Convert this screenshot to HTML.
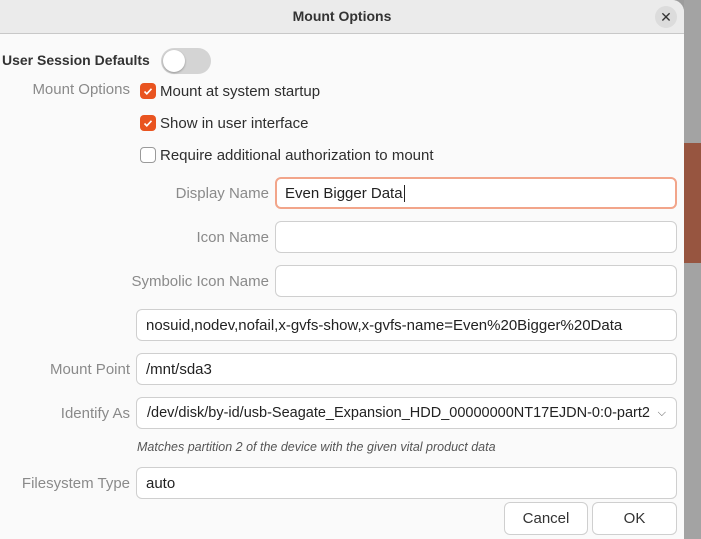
<!DOCTYPE html>
<html><head><style>
*{box-sizing:border-box;margin:0;padding:0}
body{width:701px;height:539px;overflow:hidden;background:#9c9c9c;font-family:"Liberation Sans",sans-serif;font-size:15px;color:#2e2e2e;position:relative}
.strip{position:absolute;left:684px;top:0;width:17px;height:539px;background:#a3a3a3}
.brown{position:absolute;left:684px;top:143px;width:17px;height:120px;background:#975540}
.dlg{position:absolute;left:0;top:0;width:684px;height:539px;background:#fafafa;border-top-right-radius:12px;overflow:hidden}
.hdr{height:34px;background:#ebebeb;border-bottom:1px solid #c8c8c8;text-align:center;line-height:33px;font-weight:bold;font-size:14px;color:#333}
.x{position:absolute;left:655px;top:6px;width:22px;height:22px;border-radius:50%;background:#dcdcdc;text-align:center;line-height:22px;font-size:14px;color:#333}
.a{position:absolute}
.lbl{position:absolute;color:#8a8a8a;text-align:right}
.f{position:absolute;background:#fff;border:1px solid #cfcfcf;border-radius:6px;padding-left:9px;line-height:31px;color:#222}
.cb{position:absolute;width:16px;height:16px;border-radius:4px}
.on{background:#e95420}
.off{border:1px solid #9a9a9a;background:#fff}
.btn{position:absolute;background:#fff;border:1px solid #cfcfcf;border-radius:6px;text-align:center;line-height:32px;color:#333}
</style></head><body>
<div class="strip"></div><div class="brown"></div>
<div class="dlg">
<div class="hdr">Mount Options</div>
<div class="x">✕</div>
<div class="a" style="left:2px;top:52px;font-weight:bold;color:#333;font-size:14px">User Session Defaults</div>
<div class="a" style="left:161px;top:48px;width:50px;height:26px;border-radius:13px;background:#d4d4d4"><div style="position:absolute;left:2px;top:2px;width:22px;height:22px;border-radius:50%;background:#fff;box-shadow:0 1px 2px rgba(0,0,0,.3)"></div></div>
<div class="lbl" style="left:0;width:130px;top:81px">Mount Options</div>
<div class="cb on" style="left:140px;top:83px"><svg width="16" height="16"><path d="M4.5 8.5l2.3 2.3 4.7-5" stroke="#fff" stroke-width="1.6" fill="none"/></svg></div>
<div class="a" style="left:160px;top:83px">Mount at system startup</div>
<div class="cb on" style="left:140px;top:115px"><svg width="16" height="16"><path d="M4.5 8.5l2.3 2.3 4.7-5" stroke="#fff" stroke-width="1.6" fill="none"/></svg></div>
<div class="a" style="left:160px;top:115px">Show in user interface</div>
<div class="cb off" style="left:140px;top:147px"></div>
<div class="a" style="left:160px;top:147px">Require additional authorization to mount</div>
<div class="lbl" style="left:0;width:269px;top:185px">Display Name</div>
<div class="f" style="left:275px;top:177px;width:402px;height:32px;border:2px solid #f2a58a;padding-left:8px;line-height:29px">Even Bigger Data<span style="border-left:1px solid #222;margin-left:1px"></span></div>
<div class="lbl" style="left:0;width:269px;top:229px">Icon Name</div>
<div class="f" style="left:275px;top:221px;width:402px;height:32px"></div>
<div class="lbl" style="left:0;width:269px;top:273px">Symbolic Icon Name</div>
<div class="f" style="left:275px;top:265px;width:402px;height:32px"></div>
<div class="f" style="left:136px;top:309px;width:541px;height:32px">nosuid,nodev,nofail,x-gvfs-show,x-gvfs-name=Even%20Bigger%20Data</div>
<div class="lbl" style="left:0;width:130px;top:361px">Mount Point</div>
<div class="f" style="left:136px;top:353px;width:541px;height:32px">/mnt/sda3</div>
<div class="lbl" style="left:0;width:130px;top:405px">Identify As</div>
<div class="f" style="left:136px;top:397px;width:541px;height:32px;font-size:14.5px;padding-left:10px">/dev/disk/by-id/usb-Seagate_Expansion_HDD_00000000NT17EJDN-0:0-part2 <span style="position:absolute;right:10px;font-size:11px;color:#555">⌵</span></div>
<div class="a" style="left:137px;top:440px;font-style:italic;font-size:12.5px;color:#555">Matches partition 2 of the device with the given vital product data</div>
<div class="lbl" style="left:0;width:130px;top:475px">Filesystem Type</div>
<div class="f" style="left:136px;top:467px;width:541px;height:32px">auto</div>
<div class="btn" style="left:504px;top:502px;width:84px;height:33px">Cancel</div>
<div class="btn" style="left:592px;top:502px;width:85px;height:33px">OK</div>
</div>
</body></html>
